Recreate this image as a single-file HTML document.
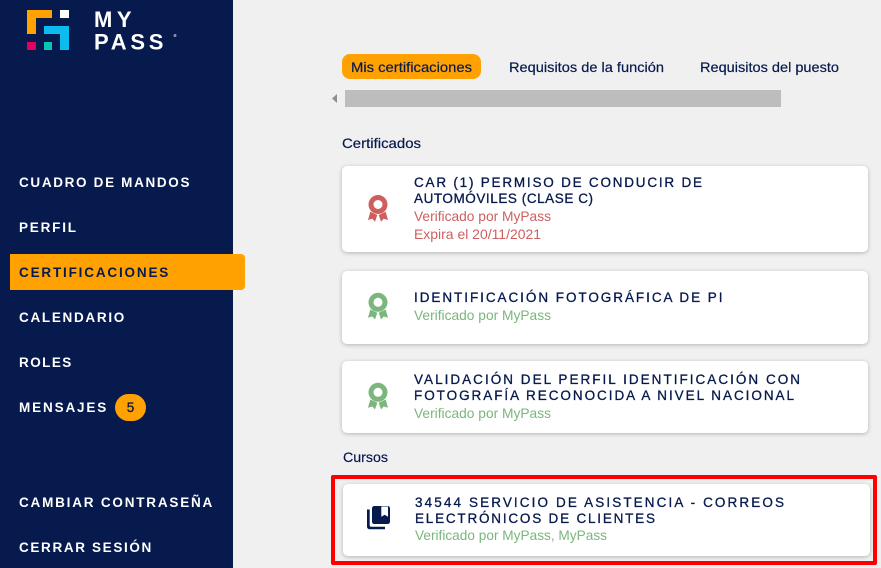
<!DOCTYPE html>
<html><head><meta charset="utf-8"><style>
html,body{margin:0;padding:0;width:881px;height:568px;overflow:hidden;background:#f0f0f0}
.a{position:absolute}
.card{position:absolute;background:#fff;border-radius:5px;box-shadow:0 1px 4px rgba(0,0,0,.25)}
svg{position:absolute;left:0;top:0}
text{font-family:"Liberation Sans",sans-serif}
.nav{font-size:13.5px;font-weight:700;fill:#fff}
.ti{font-size:13.5px;fill:#071a4e;stroke:#071a4e;stroke-width:.3}
.tb{font-size:14px;fill:#071a4e;stroke:#071a4e;stroke-width:.2}
.g{font-size:14px;fill:#7bb67d}
.r{font-size:14px;fill:#cf5f5f}
</style></head><body>
<div class="a" style="left:0;top:0;width:233px;height:568px;background:#071a4e"></div>
<div class="a" style="left:10px;top:254px;width:235px;height:36px;background:#ffa100;border-radius:0 4px 4px 0"></div>
<div class="a" style="left:115px;top:394px;width:31px;height:27px;background:#ffa100;border-radius:14px"></div>
<div class="a" style="left:342px;top:54px;width:139px;height:25px;background:#ffa100;border-radius:8px"></div>
<div class="a" style="left:345px;top:90px;width:436px;height:17px;background:#bdbdbd"></div>
<div class="card" style="left:342px;top:166px;width:526px;height:86px"></div>
<div class="card" style="left:342px;top:271px;width:526px;height:73px"></div>
<div class="card" style="left:342px;top:361px;width:526px;height:72px"></div>
<div class="a" style="left:331px;top:475px;width:538px;height:82px;border:4px solid #f00;border-radius:2px"></div>
<div class="card" style="left:343px;top:484px;width:527px;height:72px"></div>
<svg width="881" height="568" viewBox="0 0 881 568">
<!-- logo -->
<path d="M27 10H52V18H36V34H27Z" fill="#ffa100"/>
<rect x="60" y="10" width="9" height="8" fill="#fff"/>
<path d="M44 26H69V50H60V34H44Z" fill="#0dbcee"/>
<rect x="27" y="42" width="9" height="8" fill="#e5005f"/>
<rect x="44" y="42" width="8" height="8" fill="#0cc4b4"/>
<text x="94" y="27" font-size="22" font-weight="700" fill="#fff" letter-spacing="4.5">MY</text>
<text x="94" y="49.500" font-size="22" font-weight="700" fill="#fff" letter-spacing="3.700">PASS</text>
<circle cx="175" cy="35.500" r="1.500" fill="#8b94ad"/>
<!-- nav -->
<text class="nav" x="19" y="187" textLength="170.500" lengthAdjust="spacing">CUADRO DE MANDOS</text>
<text class="nav" x="19" y="232" textLength="57" lengthAdjust="spacing">PERFIL</text>
<text class="nav" x="19" y="277" textLength="149.300" lengthAdjust="spacing" style="fill:#071a4e">CERTIFICACIONES</text>
<text class="nav" x="19" y="322" textLength="105.300" lengthAdjust="spacing">CALENDARIO</text>
<text class="nav" x="19" y="367" textLength="52.300" lengthAdjust="spacing">ROLES</text>
<text class="nav" x="19" y="412" textLength="87.300" lengthAdjust="spacing">MENSAJES</text>
<text x="130.500" y="412" font-size="13.5" text-anchor="middle" fill="#071a4e" stroke="#071a4e" stroke-width=".3">5</text>
<text class="nav" x="19" y="507" textLength="193.300" lengthAdjust="spacing">CAMBIAR CONTRASEÑA</text>
<text class="nav" x="19" y="552" textLength="132.300" lengthAdjust="spacing">CERRAR SESIÓN</text>
<!-- tabs -->
<text class="tb" x="351" y="72" textLength="121" lengthAdjust="spacingAndGlyphs">Mis certificaciones</text>
<text class="tb" x="509" y="72" textLength="155" lengthAdjust="spacingAndGlyphs">Requisitos de la función</text>
<text class="tb" x="700" y="72" textLength="139" lengthAdjust="spacingAndGlyphs">Requisitos del puesto</text>
<path d="M337 94V103L332 98.500Z" fill="#8f8f8f"/>
<text class="tb" x="342" y="148" textLength="79" lengthAdjust="spacingAndGlyphs">Certificados</text>
<text class="tb" x="343" y="462" textLength="45" lengthAdjust="spacingAndGlyphs">Cursos</text>
<!-- card text -->
<text class="ti" x="414" y="187" textLength="288" lengthAdjust="spacing">CAR (1) PERMISO DE CONDUCIR DE</text>
<text class="ti" x="414" y="203" textLength="179" lengthAdjust="spacing">AUTOMÓVILES (CLASE C)</text>
<text class="r" x="414" y="221" textLength="137" lengthAdjust="spacingAndGlyphs">Verificado por MyPass</text>
<text class="r" x="414" y="239" textLength="127" lengthAdjust="spacingAndGlyphs">Expira el 20/11/2021</text>
<text class="ti" x="414" y="302" textLength="308.500" lengthAdjust="spacing">IDENTIFICACIÓN FOTOGRÁFICA DE PI</text>
<text class="g" x="414" y="320" textLength="137" lengthAdjust="spacingAndGlyphs">Verificado por MyPass</text>
<text class="ti" x="414" y="384" textLength="386" lengthAdjust="spacing">VALIDACIÓN DEL PERFIL IDENTIFICACIÓN CON</text>
<text class="ti" x="414" y="400" textLength="380" lengthAdjust="spacing">FOTOGRAFÍA RECONOCIDA A NIVEL NACIONAL</text>
<text class="g" x="414" y="418" textLength="137" lengthAdjust="spacingAndGlyphs">Verificado por MyPass</text>
<text class="ti" x="415" y="507" textLength="369" lengthAdjust="spacing">34544 SERVICIO DE ASISTENCIA - CORREOS</text>
<text class="ti" x="415" y="523" textLength="240" lengthAdjust="spacing">ELECTRÓNICOS DE CLIENTES</text>
<text class="g" x="415" y="540" textLength="192" lengthAdjust="spacingAndGlyphs">Verificado por MyPass, MyPass</text>
<!-- award icons -->
<defs><g id="aw">
<path d="M-7.700 7.200L-0.700 10.500L-3 17.200L-5.700 14.200L-10 15.500Z M7.700 7.200L0.700 10.500L3 17.200L5.700 14.200L10 15.500Z"/>
<path fill-rule="evenodd" d="M0-9.500A9.500 9.500 0 1 1 0 9.500A9.500 9.500 0 1 1 0-9.500ZM0-4.500A4.500 4.500 0 1 0 0 4.500A4.500 4.500 0 1 0 0-4.500Z"/>
</g></defs>
<use href="#aw" x="378" y="204.5" fill="#cf5f5f"/>
<use href="#aw" x="378" y="302.3" fill="#7bb67d"/>
<use href="#aw" x="378" y="392.3" fill="#7bb67d"/>
<!-- book icon -->
<path d="M367 509.500H369.700V525C369.700 526.300 370.200 526.800 371.500 526.800H385V529.300H370C368 529.300 367 528.300 367 526.300Z" fill="#071a4e"/>
<path fill-rule="evenodd" d="M374.500 506H387.500C389 506 390 507 390 508.500V521.500C390 523 389 524 387.500 524H374.500C373 524 372 523 372 521.500V508.500C372 507 373 506 374.500 506ZM381.300 506.500V516.700L384.700 514.700L388 516.700V506.500Z" fill="#071a4e"/>
</svg>
</body></html>
